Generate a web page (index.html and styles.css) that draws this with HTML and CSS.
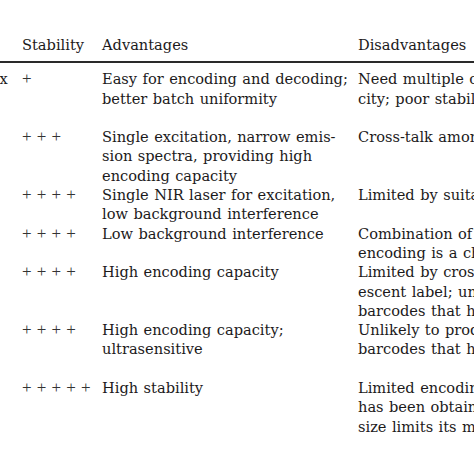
FILE: index.html
```html
<!DOCTYPE html>
<html>
<head>
<meta charset="utf-8">
<link rel="stylesheet" href="styles.css">
</head>
<body>
<div class="page">
  <div class="table">
    <div class="row head">
      <div class="cell c0">Type</div>
      <div class="cell c1">Stability</div>
      <div class="cell c2">Advantages</div>
      <div class="cell c3">Disadvantages</div>
    </div>
    <div class="rule"></div>
    <div class="row">
      <div class="cell c0">Complex<br>QDs<br>Mix</div>
      <div class="cell c1 plus">+</div>
      <div class="cell c2">Easy for encoding and decoding;<br>better batch uniformity</div>
      <div class="cell c3">Need multiple colors; low encoding capa-<br>city; poor stability</div>
    </div>
    <div class="row">
      <div class="cell c0">QDs<br>&nbsp;<br>&nbsp;</div>
      <div class="cell c1 plus">+ + +</div>
      <div class="cell c2">Single excitation, narrow emis-<br>sion spectra, providing high<br>encoding capacity</div>
      <div class="cell c3">Cross-talk among emission spectra</div>
    </div>
    <div class="row">
      <div class="cell c0">UCN<br>&nbsp;</div>
      <div class="cell c1 plus">+ + + +</div>
      <div class="cell c2">Single NIR laser for excitation,<br>low background interference</div>
      <div class="cell c3">Limited by suitable lanthanide ions</div>
    </div>
    <div class="row">
      <div class="cell c0">Dye<br>&nbsp;</div>
      <div class="cell c1 plus">+ + + +</div>
      <div class="cell c2">Low background interference</div>
      <div class="cell c3">Combination of different lifetime<br>encoding is a challenge</div>
    </div>
    <div class="row">
      <div class="cell c0">SERS<br>&nbsp;<br>&nbsp;</div>
      <div class="cell c1 plus">+ + + +</div>
      <div class="cell c2">High encoding capacity</div>
      <div class="cell c3">Limited by cross-talk of fluor-<br>escent label; unable to produce<br>barcodes that have high stability</div>
    </div>
    <div class="row">
      <div class="cell c0">Raman<br>&nbsp;<br>&nbsp;</div>
      <div class="cell c1 plus">+ + + +</div>
      <div class="cell c2">High encoding capacity;<br>ultrasensitive</div>
      <div class="cell c3">Unlikely to produce large-scale<br>barcodes that have uniformity</div>
    </div>
    <div class="row">
      <div class="cell c0">PhC<br>&nbsp;<br>&nbsp;</div>
      <div class="cell c1 plus">+ + + + +</div>
      <div class="cell c2">High stability</div>
      <div class="cell c3">Limited encoding capacity<br>has been obtained; particle<br>size limits its multiplexing</div>
    </div>
  </div>
</div>
</body>
</html>
```

FILE: styles.css
```css
html, body {
  margin: 0;
  padding: 0;
  background: #ffffff;
}
.page {
  width: 474px;
  height: 474px;
  overflow: hidden;
}
.table {
  margin-left: -57px;
  width: 760px;
  padding-top: 35px;
  font-family: "DejaVu Serif", serif;
  font-size: 14.6px;
  line-height: 19.3px;
  word-spacing: 0.8px;
  color: #1c1a1b;
}
.row {
  display: grid;
  grid-template-columns: 79px 80px 256px 1fr;
}
.cell {
  white-space: nowrap;
}
.c0 {
  text-align: left;
}
.rule {
  height: 2px;
  background: #2a2a2a;
  margin-top: 7px;
  margin-bottom: 6px;
}
.plus {
  font-family: "Liberation Serif", serif;
  font-size: 17px;
  word-spacing: 0.9px;
  color: #333333;
}
```
